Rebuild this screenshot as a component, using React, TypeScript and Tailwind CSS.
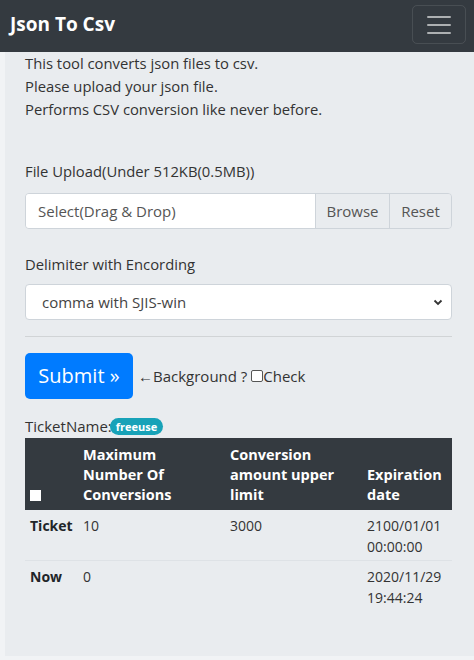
import React from "react";

const font = { fontFamily: '"Open Sans", "Noto Sans", sans-serif' };

export default function App() {
  return (
    <div className="w-[474px] h-[660px] bg-[#f1f3f5] overflow-hidden text-[#212529]" style={font}>
      <nav className="h-[52px] bg-[#343a40] flex items-center justify-between pl-[10px] pr-[8px]">
        <span className="text-white font-bold text-[19px] leading-none mb-[4px]">Json To Csv</span>
        <button className="w-[54px] h-[39px] mb-[3px] border border-white/10 rounded-[5px] flex flex-col items-center justify-center gap-[6px]">
          <span className="block w-[24px] h-[2px] bg-white/60 rounded" />
          <span className="block w-[24px] h-[2px] bg-white/60 rounded" />
          <span className="block w-[24px] h-[2px] bg-white/60 rounded" />
        </button>
      </nav>
      <div className="ml-[5px] h-[604px] bg-[#e9ecef] pl-[20px] pr-[22px]">
        <div className="text-[14.8px] leading-[23px] text-[#333]">
          <p>This tool converts json files to csv.</p>
          <p>Please upload your json file.</p>
          <p>Performs CSV conversion like never before.</p>
        </div>

        <div className="mt-[39px] text-[14.8px] leading-[23px] text-[#333]">File Upload(Under 512KB(0.5MB))</div>
        <div className="mt-[10px] flex h-[36px] border border-[#ced4da] rounded-[4px] overflow-hidden text-[15px]">
          <div className="flex-1 bg-white flex items-center pl-[12px] text-[#555]">Select(Drag &amp; Drop)</div>
          <div className="w-[74px] bg-[#e9ecef] border-l border-[#ced4da] flex items-center justify-center text-[#555]">Browse</div>
          <div className="w-[62px] bg-[#e9ecef] border-l border-[#ced4da] flex items-center justify-center text-[#555]">Reset</div>
        </div>

        <div className="mt-[24px] text-[14.8px] leading-[23px] text-[#333]">Delimiter with Encording</div>
        <div className="mt-[8px] flex items-center justify-between h-[36px] bg-white border border-[#ced4da] rounded-[4px] pl-[16px] pr-[8px] text-[15px] text-[#444]">
          <span>comma with SJIS-win</span>
          <svg width="10" height="8" viewBox="0 0 10 8">
            <path d="M1.5 2.5 L5 6 L8.5 2.5" fill="none" stroke="#333" strokeWidth="1.8" />
          </svg>
        </div>

        <hr className="mt-[16px] border-0 border-t border-black/10" />

        <div className="mt-[16px] flex items-center">
          <button className="w-[108px] h-[46px] bg-[#007bff] rounded-[5px] text-white text-[20px] flex items-center justify-center">
            Submit »
          </button>
          <span className="ml-[5px] text-[15px] text-[#333] flex items-center">
            ←Background ?&nbsp;
            <span className="inline-block w-[12px] h-[12px] border border-[#555] rounded-[2px] bg-white" />
            Check
          </span>
        </div>

        <div className="mt-[16px] flex items-center text-[15px] leading-[23px] text-[#333]">
          <span>TicketName:</span>
          <span className="-ml-[2px] bg-[#17a2b8] text-white font-bold text-[11px] leading-[17px] h-[17px] px-[6px] rounded-full">freeuse</span>
        </div>

        <table className="table-fixed w-[427px] border-collapse text-[14px] leading-[21px]">
          <thead>
            <tr className="bg-[#343a40] text-white font-bold">
              <th className="w-[53px] px-[5px] pt-[7px] pb-[5px] align-bottom text-left">
                <span className="block w-[11px] h-[11px] bg-white mb-[4px]" />
              </th>
              <th className="w-[147px] px-[5px] pt-[7px] pb-[5px] align-bottom text-left text-[14.5px] leading-[20px]">
                Maximum
                <br />
                Number Of
                <br />
                Conversions
              </th>
              <th className="w-[137px] px-[5px] pt-[7px] pb-[5px] align-bottom text-left text-[14.5px] leading-[20px]">
                Conversion
                <br />
                amount upper
                <br />
                limit
              </th>
              <th className="w-[90px] px-[5px] pt-[7px] pb-[5px] align-bottom text-left text-[14.5px] leading-[20px]">
                Expiration
                <br />
                date
              </th>
            </tr>
          </thead>
          <tbody className="text-[#333]">
            <tr>
              <td className="px-[5px] pt-[5px] pb-[3px] align-top font-bold text-[#212529]">Ticket</td>
              <td className="px-[5px] pt-[5px] pb-[3px] align-top">10</td>
              <td className="px-[5px] pt-[5px] pb-[3px] align-top">3000</td>
              <td className="px-[5px] pt-[5px] pb-[3px] align-top">2100/01/01 00:00:00</td>
            </tr>
            <tr className="border-t border-[#dee2e6]">
              <td className="px-[5px] pt-[5px] pb-[3px] align-top font-bold text-[#212529]">Now</td>
              <td className="px-[5px] pt-[5px] pb-[3px] align-top">0</td>
              <td className="px-[5px] pt-[5px] pb-[3px] align-top"></td>
              <td className="px-[5px] pt-[5px] pb-[3px] align-top">2020/11/29 19:44:24</td>
            </tr>
          </tbody>
        </table>
      </div>
    </div>
  );
}
